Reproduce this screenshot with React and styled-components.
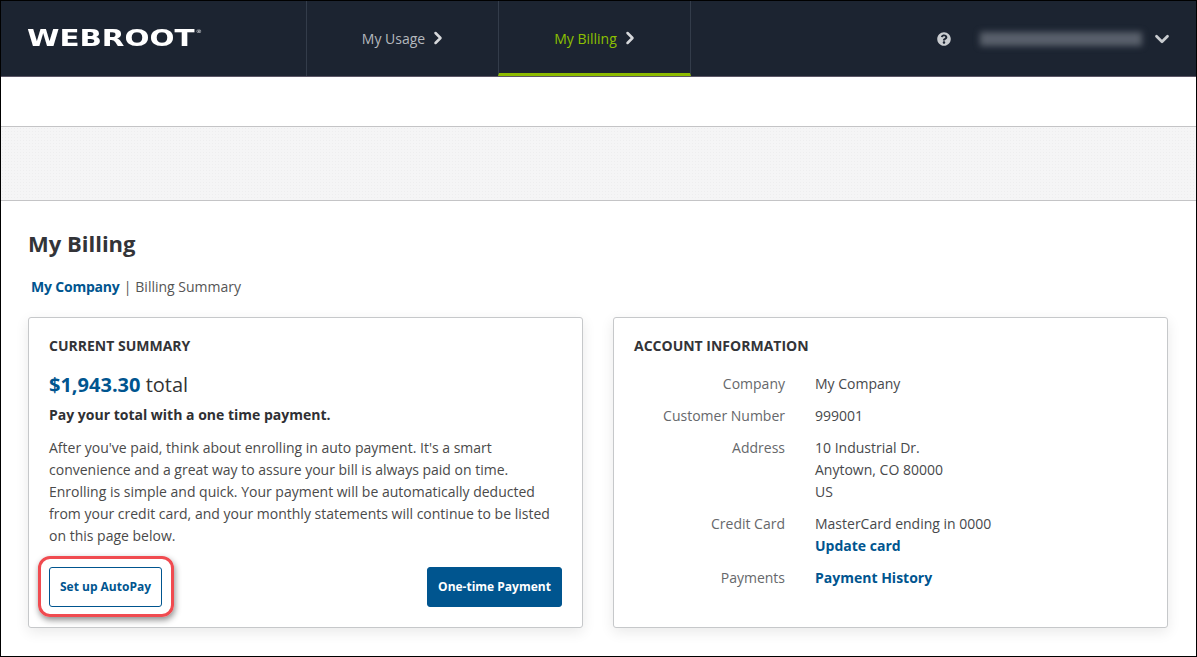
import React from 'react';
import styled, { createGlobalStyle } from 'styled-components';
import { ChevronRight, ChevronDown } from 'lucide-react';
import { FaQuestionCircle } from 'react-icons/fa';

const GlobalStyle = createGlobalStyle`
  html, body {
    margin: 0;
    padding: 0;
    background: #fff;
  }
  body {
    font-family: "Open Sans", "Liberation Sans", sans-serif;
    font-size: 14px;
    color: #444;
  }
`;

const Page = styled.div`
  box-sizing: border-box;
  width: 1197px;
  height: 657px;
  border: 1px solid #000;
  overflow: hidden;
  background: #fff;
`;

const Header = styled.header`
  height: 73px;
  padding-top: 2px;
  box-sizing: content-box;
  display: flex;
  align-items: stretch;
  background: #1c2431;
  border-bottom: 1px solid #5b5666;
`;

const LogoArea = styled.div`
  width: 305px;
  padding-left: 26px;
  box-sizing: border-box;
  display: flex;
  align-items: center;
`;

const Logo = styled.div`
  display: inline-block;
  font-family: "DejaVu Sans", sans-serif;
  font-weight: 700;
  font-size: 23.5px;
  line-height: 1;
  color: #fff;
  white-space: nowrap;
  transform: scaleX(1.25);
  transform-origin: left center;
  margin-top: -1px;

  sup {
    font-size: 5px;
    vertical-align: 13px;
    line-height: 0;
    color: #c8ccd0;
    margin-left: 1px;
  }
`;

const NavItem = styled.a`
  box-sizing: border-box;
  width: 192px;
  display: flex;
  align-items: center;
  justify-content: center;
  gap: 3px;
  margin-top: -2px;
  padding: 2px 0 ${(p) => (p.$active ? '0' : '3px')} 5px;
  border-left: 1px solid #333c4a;
  border-bottom: ${(p) => (p.$active ? '3px solid #8dbb00' : 'none')};
  color: ${(p) => (p.$active ? '#8dc000' : '#b4b8bd')};
  font-size: 14px;

  &:last-of-type {
    width: 193px;
    border-right: 1px solid #333c4a;
  }

  svg {
    color: #d6d8db;
  }
`;

const UserArea = styled.div`
  margin-left: auto;
  display: flex;
  align-items: center;
  padding-right: 23px;
  margin-top: -1px;
  color: #c9ccd0;
`;

const BlurredEmail = styled.div`
  width: 162px;
  height: 14px;
  margin: 0 9px 0 29px;
  background: #59606b;
  filter: blur(3px);
`;

const Spacer = styled.div`
  height: 49px;
`;

const Band = styled.div`
  height: 73px;
  background-color: #f5f5f6;
  background-image: radial-gradient(#eeeeef 0.6px, transparent 0.7px);
  background-size: 3px 3px;
  border-top: 1px solid #c4c4c6;
  border-bottom: 1px solid #c4c4c6;
`;

const Main = styled.main`
  padding: 27px 28px 0 27px;
`;

const Title = styled.h1`
  margin: 0;
  font-size: 22px;
  line-height: 30px;
  font-weight: 700;
  color: #333438;
`;

const Breadcrumb = styled.div`
  margin: 19px 0 20px 3px;
  line-height: 20px;
  color: #555;
  display: flex;
  gap: 4px;

  b {
    color: #00558f;
    font-weight: 700;
    letter-spacing: -0.2px;
  }
`;

const Cards = styled.div`
  display: grid;
  grid-template-columns: 555px 555px;
  gap: 30px;
`;

const Card = styled.section`
  box-sizing: border-box;
  height: 311px;
  padding: 18px 20px 19px;
  background: #fff;
  border: 1px solid #c6c8ca;
  border-radius: 3px;
  box-shadow: 0 4px 14px rgba(0, 0, 0, 0.09);
`;

const CardTitle = styled.h2`
  margin: 0;
  font-size: 14px;
  line-height: 20px;
  font-weight: 700;
  color: #333438;
  text-transform: uppercase;
`;

const Total = styled.div`
  margin-top: 15px;
  font-size: 20px;
  line-height: 28px;
  color: #333;

  b {
    color: #00558f;
    font-weight: 700;
  }
`;

const Lead = styled.div`
  margin-top: 5px;
  line-height: 22px;
  font-weight: 700;
  color: #2f3033;
`;

const Body = styled.p`
  margin: 11px 0 20px;
  line-height: 22px;
  color: #4a4a4a;
`;

const Actions = styled.div`
  display: flex;
  justify-content: space-between;
`;

const Highlighted = styled.div`
  position: relative;

  &::after {
    content: '';
    position: absolute;
    left: -11px;
    right: -12px;
    top: -11px;
    bottom: -10px;
    border: 3px solid #f04b50;
    border-radius: 12px;
    box-shadow: 1px 3px 6px rgba(0, 0, 0, 0.45);
    pointer-events: none;
  }
`;

const Button = styled.button`
  box-sizing: border-box;
  height: 40px;
  width: ${(p) => (p.$primary ? '135px' : '113px')};
  padding: 0 0 1px;
  font-family: inherit;
  font-size: 12px;
  font-weight: 700;
  border-radius: 3px;
  border: 1px solid #00558f;
  background: ${(p) => (p.$primary ? '#00558f' : '#fff')};
  color: ${(p) => (p.$primary ? '#fff' : '#00558f')};
`;

const InfoGrid = styled.dl`
  margin: 17px 0 0;
  display: grid;
  grid-template-columns: 151px 1fr;
  column-gap: 30px;
  row-gap: 10px;
  line-height: 22px;
`;

const Label = styled.dt`
  text-align: right;
  color: #66686b;
`;

const Value = styled.dd`
  margin: 0;
  color: #47494c;
`;

const InfoLink = styled.a`
  display: block;
  color: #00558f;
  font-weight: 700;
`;

export default function App() {
  return (
    <Page>
      <GlobalStyle />
      <Header>
        <LogoArea>
          <Logo>
            WEBROOT<sup>®</sup>
          </Logo>
        </LogoArea>
        <NavItem>
          My Usage <ChevronRight size={20} strokeWidth={3} />
        </NavItem>
        <NavItem $active>
          My Billing <ChevronRight size={20} strokeWidth={3} />
        </NavItem>
        <UserArea>
          <FaQuestionCircle size={14} />
          <BlurredEmail />
          <ChevronDown size={22} strokeWidth={3} />
        </UserArea>
      </Header>
      <Spacer />
      <Band />
      <Main>
        <Title>My Billing</Title>
        <Breadcrumb>
          <b>My Company</b>
          <span>|</span>
          <span>Billing Summary</span>
        </Breadcrumb>
        <Cards>
          <Card>
            <CardTitle>Current Summary</CardTitle>
            <Total>
              <b>$1,943.30</b> total
            </Total>
            <Lead>Pay your total with a one time payment.</Lead>
            <Body>
              After you've paid, think about enrolling in auto payment. It's a smart
              convenience and a great way to assure your bill is always paid on time.
              Enrolling is simple and quick. Your payment will be automatically deducted
              from your credit card, and your monthly statements will continue to be listed
              on this page below.
            </Body>
            <Actions>
              <Highlighted>
                <Button>Set up AutoPay</Button>
              </Highlighted>
              <Button $primary>One-time Payment</Button>
            </Actions>
          </Card>
          <Card>
            <CardTitle>Account Information</CardTitle>
            <InfoGrid>
              <Label>Company</Label>
              <Value>My Company</Value>
              <Label>Customer Number</Label>
              <Value>999001</Value>
              <Label>Address</Label>
              <Value>
                10 Industrial Dr.
                <br />
                Anytown, CO 80000
                <br />
                US
              </Value>
              <Label>Credit Card</Label>
              <Value>
                MasterCard ending in 0000
                <InfoLink>Update card</InfoLink>
              </Value>
              <Label>Payments</Label>
              <Value>
                <InfoLink>Payment History</InfoLink>
              </Value>
            </InfoGrid>
          </Card>
        </Cards>
      </Main>
    </Page>
  );
}
